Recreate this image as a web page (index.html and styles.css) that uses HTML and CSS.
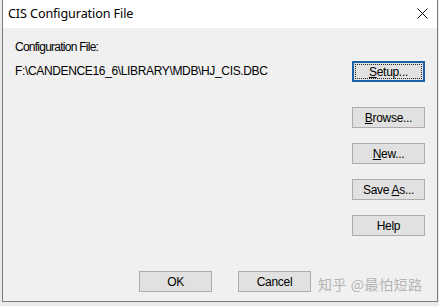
FILE: index.html
```html
<!DOCTYPE html>
<html>
  <head>
    <meta charset="UTF-8">
    <title>CIS Configuration File</title>
    <link rel="stylesheet" href="styles.css">
  </head>
  <body>

    <div class='window'>
      <div class='title-bar'>
        <span class='title'>CIS Configuration File</span>
        <button class='close' aria-label='Close'>
          <svg width='11' height='11' viewBox='0 0 11 11'>
            <path d='M0.5 0.5 L10.5 10.5 M10.5 0.5 L0.5 10.5' stroke='#000' stroke-width='1' fill='none'/>
          </svg>
        </button>
      </div>

      <div class='content'>
        <div class='label'>Configuration File:</div>
        <div class='path-row'>
          <span class='path'>F:\CANDENCE16_6\LIBRARY\MDB\HJ_CIS.DBC</span>
          <button class='btn default'><span class='focus'><u>S</u>etup...</span></button>
        </div>
        <div class='side'>
          <button class='btn'><u>B</u>rowse...</button>
          <button class='btn'><u>N</u>ew...</button>
          <button class='btn'>Save <u>A</u>s...</button>
          <button class='btn'>Help</button>
        </div>
        <div class='footer'>
          <button class='btn'>OK</button>
          <button class='btn'>Cancel</button>
        </div>
      </div>

      <div class='watermark'>知乎 @最怕短路</div>
    </div>

  </body>
</html>
```

FILE: styles.css
```css
html, body {
  margin: 0;
  padding: 0;
  height: 100%;
  width: 100%;
}

body {
  background: #ebebeb;
  font-family: "Liberation Sans", Arial, sans-serif;
  font-size: 12px;
  color: #000;
}

.window {
  position: relative;
  margin-left: 2px;
  width: 434px;
  height: 301px;
  border: 1px solid #7a7a7a;
  border-top: none;
  background: #f0f0f0;
  display: flex;
  flex-direction: column;
}

.title-bar {
  height: 28px;
  background: #fff;
  display: flex;
  align-items: center;
  justify-content: space-between;
  padding-left: 5px;
}

.title {
  font-family: "Noto Sans", sans-serif;
  font-size: 12.6px;
  letter-spacing: -0.1px;
  padding-bottom: 1px;
}

.close {
  -webkit-appearance: none;
  width: 30px;
  height: 28px;
  background: transparent;
  border: none;
  padding: 0 0 1px 0;
  display: flex;
  align-items: center;
  justify-content: center;
}

.content {
  flex: 1;
  display: flex;
  flex-direction: column;
  padding: 0 12px 9px 12px;
}

.label {
  margin-top: 12px;
  line-height: 14px;
  letter-spacing: -0.75px;
}

.path-row {
  margin-top: 7px;
  display: flex;
  align-items: center;
  justify-content: space-between;
}

.path {
  letter-spacing: -0.35px;
  padding-bottom: 1px;
}

.btn {
  -webkit-appearance: none;
  width: 73px;
  height: 21px;
  padding: 0;
  background: #e1e1e1;
  border: 1px solid #adadad;
  font-family: "Liberation Sans", Arial, sans-serif;
  font-size: 12px;
  letter-spacing: -0.3px;
  color: #000;
}

.btn.default {
  border: 2px solid #1a62a6;
  padding: 1px;
}

.btn .focus {
  display: flex;
  align-items: center;
  justify-content: center;
  height: 100%;
  box-sizing: border-box;
  border: 1px dotted #222;
}

.side {
  align-self: flex-end;
  margin-top: 25px;
  display: flex;
  flex-direction: column;
  gap: 15px;
}

.footer {
  margin-top: auto;
  padding-left: 124px;
  display: flex;
  gap: 26px;
}

.watermark {
  position: absolute;
  left: 315px;
  top: 274px;
  font-family: "Noto Sans CJK SC", sans-serif;
  font-size: 14px;
  color: #b4b4b4;
  letter-spacing: 0.5px;
}
```
